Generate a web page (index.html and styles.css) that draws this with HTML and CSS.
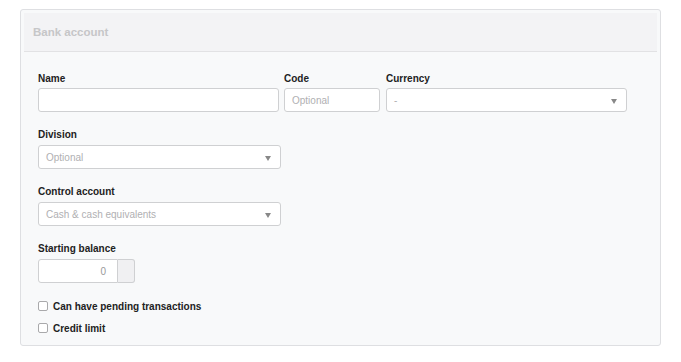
FILE: index.html
```html
<!DOCTYPE html>
<html lang="en">
<head>
    <meta charset="UTF-8">
    <title>Bank account</title>
    <link rel="stylesheet" href="styles.css">
</head>
<body>
    <div class="panel">
        <div class="panel-head">Bank account</div>
        <div class="panel-body">
            <div class="row">
                <div class="field">
                    <label class="lbl">Name</label>
                    <div class="input wide"></div>
                </div>
                <div class="field">
                    <label class="lbl">Code</label>
                    <div class="input code"><span class="ph">Optional</span></div>
                </div>
                <div class="field">
                    <label class="lbl">Currency</label>
                    <div class="input select wide"><span class="ph">-</span><span class="arrow"></span></div>
                </div>
            </div>
            <div class="field">
                <label class="lbl">Division</label>
                <div class="input select long"><span class="ph">Optional</span><span class="arrow"></span></div>
            </div>
            <div class="field">
                <label class="lbl">Control account</label>
                <div class="input select long"><span class="ph">Cash &amp; cash equivalents</span><span class="arrow"></span></div>
            </div>
            <div class="field">
                <label class="lbl">Starting balance</label>
                <div class="input-group">
                    <div class="input amount"><span class="val">0</span></div>
                    <div class="addon"></div>
                </div>
            </div>
            <div class="check"><span class="box"></span>Can have pending transactions</div>
            <div class="check"><span class="box"></span>Credit limit</div>
        </div>
    </div>
</body>
</html>
```

FILE: styles.css
```css
body {
    margin: 0;
    padding: 9px 20px;
    background-color: #ffffff;
    font-family: "Liberation Sans", Arial, sans-serif;
    color: #222;
}
.panel {
    border: 1px solid #dedfe2;
    border-radius: 3px;
    background-color: #f8f9fa;
    height: 337px;
    box-sizing: border-box;
}
.panel-head {
    margin: 3px 3px 0 3px;
    height: 38px;
    padding-left: 9px;
    display: flex;
    align-items: center;
    background-color: #f3f3f5;
    border-bottom: 1px solid #e2e2e4;
    color: #c6c6c8;
    font-size: 11.5px;
    font-weight: bold;
}
.panel-body {
    padding: 20px 17px 0 17px;
}
.row {
    display: flex;
    gap: 5px;
}
.row .field:last-child {
    margin-left: 1px;
}
.field {
    margin-bottom: 16px;
}
.lbl {
    display: block;
    font-size: 10px;
    font-weight: bold;
    line-height: 14px;
    margin-bottom: 3px;
}
.row .lbl {
    margin-bottom: 2px;
}
.input {
    height: 24px;
    box-sizing: border-box;
    border: 1px solid #cfd0d2;
    border-radius: 3px;
    background-color: #fff;
    display: flex;
    align-items: center;
    padding: 0 7px;
    font-size: 10px;
}
.wide {
    width: 241px;
}
.long {
    width: 243px;
}
.code {
    width: 96px;
}
.ph {
    color: #b0b0b2;
}
.select {
    justify-content: space-between;
    padding-right: 9px;
}
.arrow {
    width: 0;
    height: 0;
    border-left: 3px solid transparent;
    border-right: 3px solid transparent;
    border-top: 5px solid #888;
    margin-top: 2px;
}
.input-group {
    display: flex;
}
.amount {
    width: 80px;
    justify-content: flex-end;
    padding-right: 11px;
    border-radius: 3px 0 0 3px;
}
.val {
    color: #999;
}
.addon {
    width: 17px;
    height: 24px;
    box-sizing: border-box;
    border: 1px solid #cfd0d2;
    border-left: none;
    border-radius: 0 3px 3px 0;
    background-color: #f0f0f2;
}
.check {
    display: flex;
    align-items: center;
    gap: 5px;
    font-size: 10px;
    font-weight: bold;
    height: 14px;
    margin-bottom: 8px;
}
.box {
    width: 10px;
    height: 10px;
    box-sizing: border-box;
    border: 1px solid #a9a9ab;
    border-radius: 2px;
    background-color: #fff;
}
```
